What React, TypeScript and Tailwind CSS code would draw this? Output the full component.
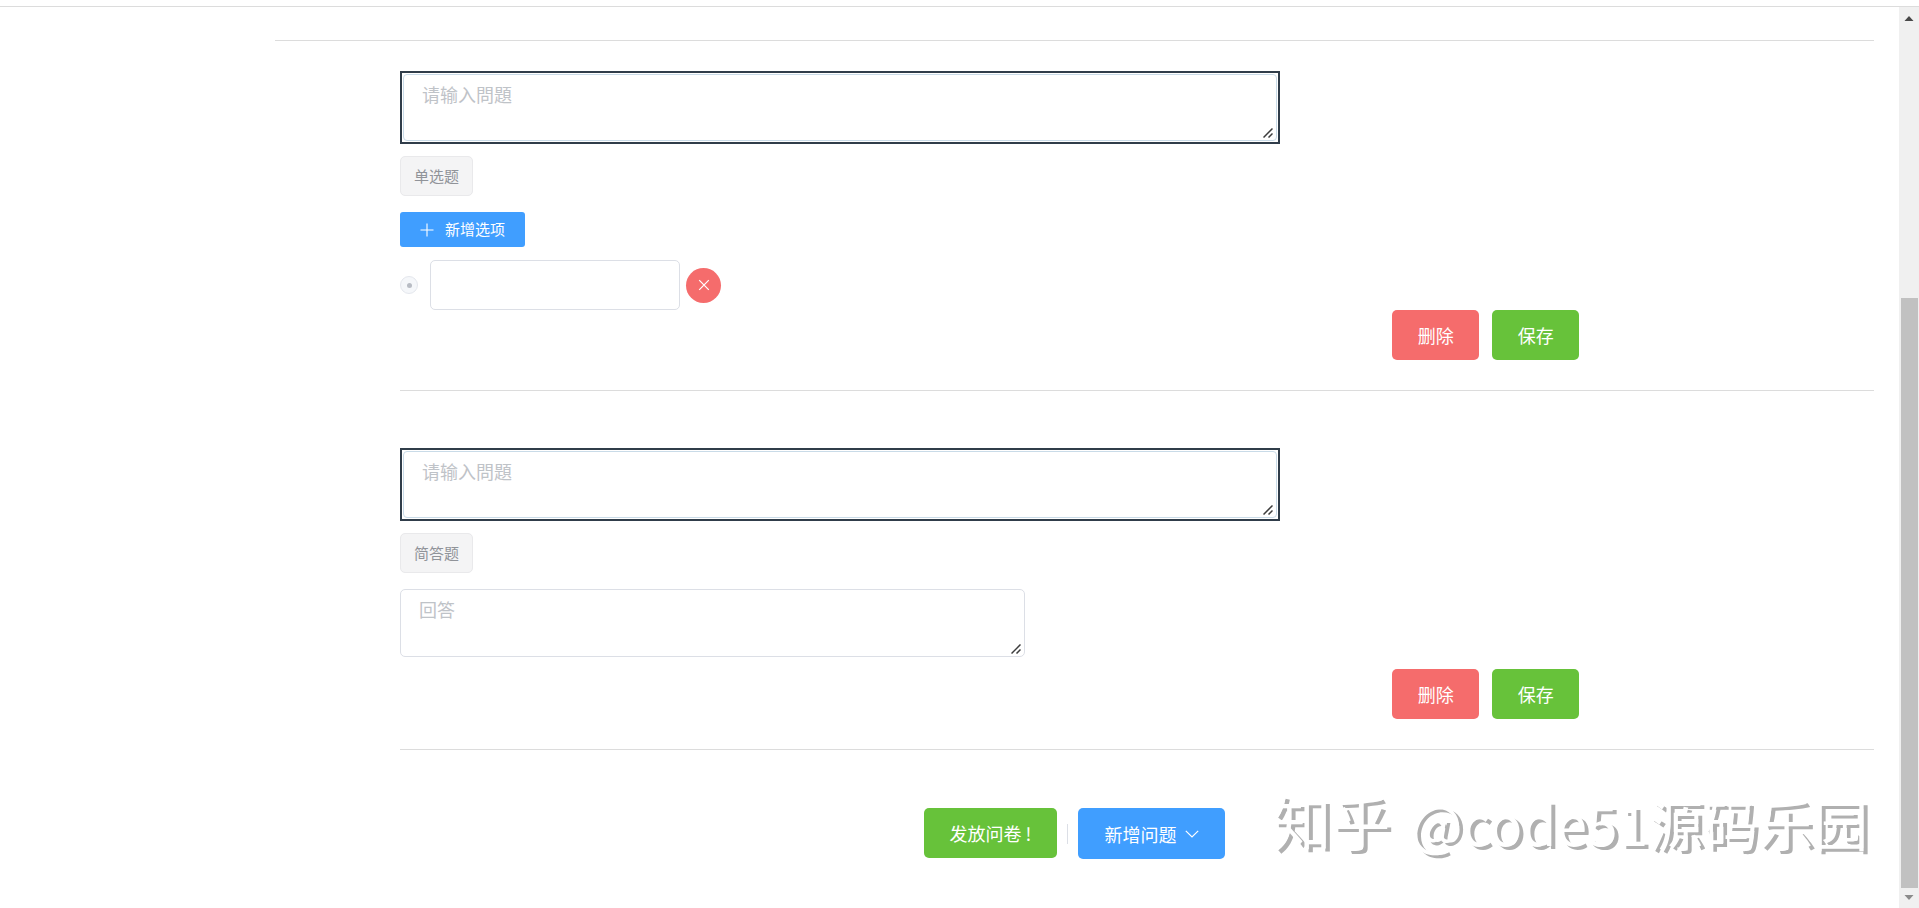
import type { ReactNode } from "react";

function ResizeGrip() {
  return (
    <svg
      aria-hidden="true"
      viewBox="0 0 10 10"
      className="pointer-events-none absolute right-1 bottom-[3px] size-2.5"
      stroke="#3c3c3c"
      strokeWidth="1.5"
    >
      <path d="M0.5 9.5 L9.5 0.5 M5.5 9.5 L9.5 5.5" />
    </svg>
  );
}

function QuestionBox() {
  return (
    <div className="w-[880px] max-w-full border-2 border-[#303d4a] p-px">
      <div className="relative">
        <textarea
          aria-label="请输入問題"
          placeholder="请输入問題"
          className="block h-[67px] w-full resize-none rounded border border-[#c9dbe8] bg-white px-[18px] py-1.5 text-lg leading-[26px] text-[#606266] outline-none placeholder:text-[#bfc3c8]"
        />
        <ResizeGrip />
      </div>
    </div>
  );
}

function Tag({ children }: { children: ReactNode }) {
  return (
    <span className="mt-3 mb-4 flex h-10 w-fit items-center rounded-[5px] border border-[#e9e9eb] bg-[#f4f4f5] px-[13px] text-[15px] text-[#909399]">
      {children}
    </span>
  );
}

function Actions() {
  return (
    <div className="flex w-4/5 justify-end gap-[13px]">
      <button type="button" className="h-[50px] w-[87px] rounded-[5px] bg-[#f56c6c] text-lg text-white">
        删除
      </button>
      <button type="button" className="h-[50px] w-[87px] rounded-[5px] bg-[#67c23a] text-lg text-white">
        保存
      </button>
    </div>
  );
}

function Scrollbar() {
  return (
    <div aria-hidden="true" className="flex w-5 flex-col items-center bg-[#f0f0f0]">
      <svg viewBox="0 0 20 20" className="size-5 shrink-0">
        <path d="M10 9 L14.5 14 H5.5 Z" fill="#484848" />
      </svg>
      <div className="grow-[271]" />
      <div className="w-[17px] grow-[590] bg-[#c1c1c1]" />
      <svg viewBox="0 0 20 20" className="size-5 shrink-0">
        <path d="M5.5 7 H14.5 L10 12 Z" fill="#8b8b8b" />
      </svg>
    </div>
  );
}

export default function App() {
  return (
    <div className="flex min-h-screen flex-col bg-white pt-1.5 font-['Noto_Sans_CJK_SC',sans-serif] font-normal">
      <div className="flex grow border-t border-[#dcdcdc]">
        <main className="relative min-w-0 grow pr-[25px] pl-[275px]">
          <hr className="mt-[33px] border-[#dcdcdc]" />

          <div className="pl-[125px]">
            <section className="border-b border-[#dcdcdc] py-[30px]">
              <QuestionBox />
              <Tag>单选题</Tag>
              <button
                type="button"
                className="flex h-[35px] w-[125px] items-center justify-center gap-[11px] rounded-[3px] bg-[#409eff] text-[15px] text-white"
              >
                <svg viewBox="0 0 14 14" className="size-3.5" stroke="currentColor" strokeWidth="1.1">
                  <path d="M7 0.5 V13.5 M0.5 7 H13.5" />
                </svg>
                新增选项
              </button>
              <div className="mt-[13px] flex items-center">
                <input
                  type="radio"
                  name="option"
                  aria-label="选项"
                  defaultChecked
                  disabled
                  className="flex size-[18px] appearance-none items-center justify-center rounded-full border border-[#e4e7ed] bg-[#f5f7fa] before:size-[5px] before:rounded-full before:bg-[#b8bcc4] before:content-['']"
                />
                <input
                  type="text"
                  aria-label="选项内容"
                  className="ml-3 h-[50px] w-[250px] rounded-[5px] border border-[#dcdfe6] px-[18px] text-lg text-[#606266] outline-none"
                />
                <button
                  type="button"
                  aria-label="删除选项"
                  className="ml-1.5 flex size-[35px] items-center justify-center rounded-full bg-[#f56c6c] text-white"
                >
                  <svg viewBox="0 0 12 12" className="size-3" stroke="currentColor" strokeWidth="1.2">
                    <path d="M1.2 1.2 L10.8 10.8 M10.8 1.2 L1.2 10.8" />
                  </svg>
                </button>
              </div>
              <Actions />
            </section>

            <section className="border-b border-[#dcdcdc] pt-[57px] pb-[30px]">
              <QuestionBox />
              <Tag>简答题</Tag>
              <div className="relative mb-3 w-[625px] max-w-full">
                <textarea
                  aria-label="回答"
                  placeholder="回答"
                  className="block h-[68px] w-full resize-none rounded-[5px] border border-[#dcdfe6] bg-white px-[18px] py-1.5 text-lg leading-[26px] text-[#606266] outline-none placeholder:text-[#bfc3c8]"
                />
                <ResizeGrip />
              </div>
              <Actions />
            </section>
          </div>

          <div className="mt-[58px] flex items-start justify-center">
            <button type="button" className="h-[50px] w-[133px] rounded-[5px] bg-[#67c23a] text-lg text-white">
              发放问卷 !
            </button>
            <span className="mx-2.5 mt-4 h-5 w-px bg-[#dcdfe6]" />
            <button
              type="button"
              className="flex h-[51px] w-[147px] items-center justify-center gap-2 rounded-[5px] bg-[#409eff] text-lg text-white"
            >
              新增问题
              <svg viewBox="0 0 14 8" className="h-2 w-3.5" fill="none" stroke="currentColor" strokeWidth="1.2">
                <path d="M0.8 0.8 L7 7 L13.2 0.8" />
              </svg>
            </button>
          </div>

          <p className="absolute right-[31px] bottom-11 flex items-baseline gap-5 text-[55px] leading-[84px] whitespace-nowrap text-white [text-shadow:4px_3px_0_#b0b0b0]">
            <span className="text-[59px]">知乎</span>
            <span>@code51源码乐园</span>
          </p>
        </main>
        <Scrollbar />
      </div>
    </div>
  );
}
